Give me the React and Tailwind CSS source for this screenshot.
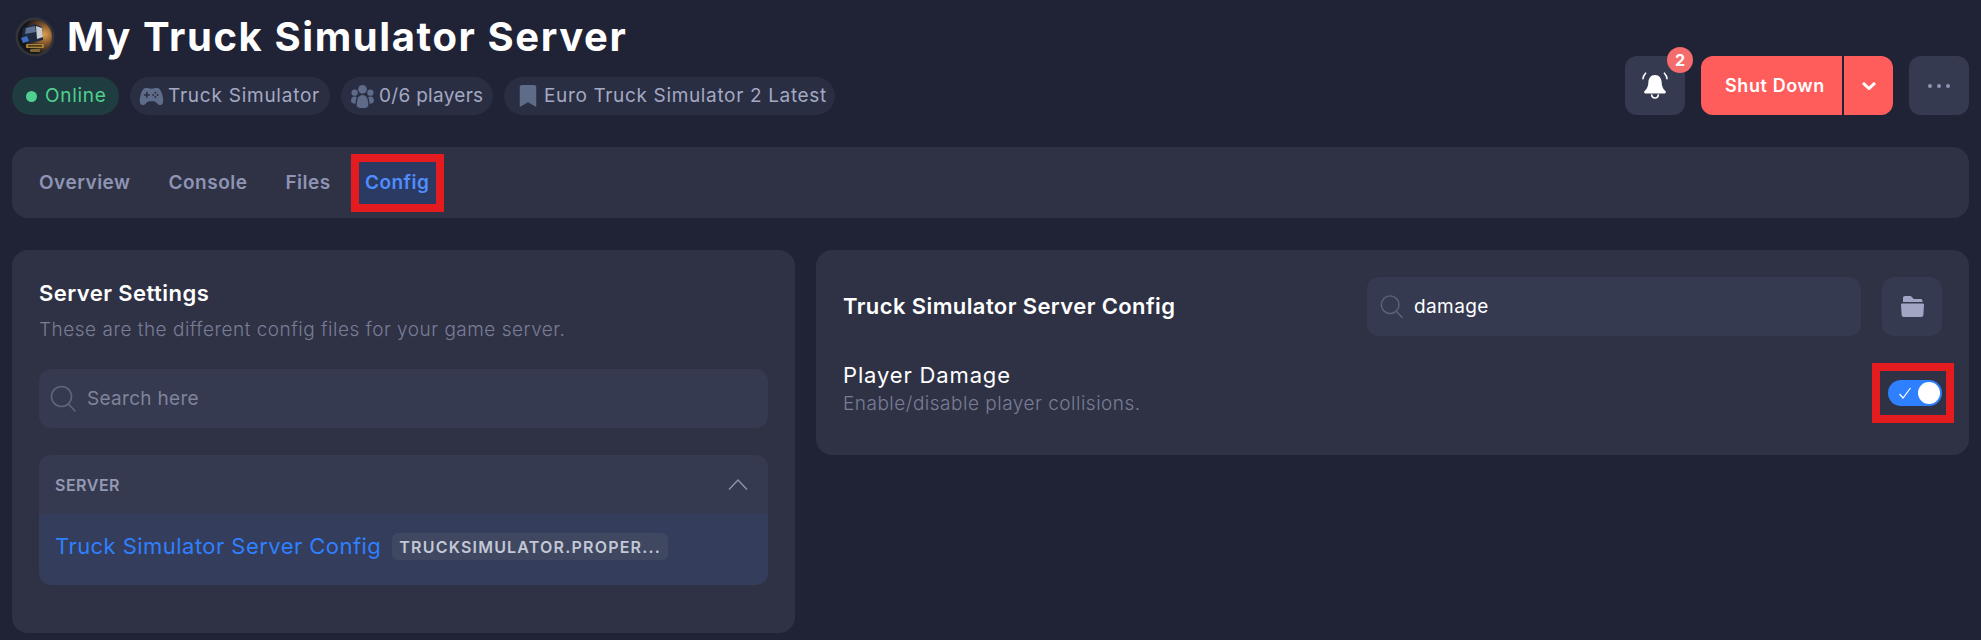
import { FaBookmark } from "react-icons/fa";
import { IoGameController } from "react-icons/io5";

const tabs = ["Overview", "Console", "Files"];

function SearchIcon({ className }) {
    return (
        <svg className={className} viewBox="0 0 26 27" fill="none" stroke="currentColor" strokeWidth="1.6" strokeLinecap="round">
            <circle cx="11.5" cy="11.5" r="10" />
            <path d="M18.5 19 L25 26" />
        </svg>
    );
}

function UsersIcon({ className }) {
    return (
        <svg className={className} viewBox="0 0 24 24" fill="currentColor">
            <circle cx="12" cy="4.5" r="4.5" />
            <circle cx="3.8" cy="8" r="3.3" />
            <circle cx="20.2" cy="8" r="3.3" />
            <path d="M6 21 C6 14 8 10.5 12 10.5 C16 10.5 18 14 18 21 C18 23 16 24 12 24 C8 24 6 23 6 21 Z" />
            <path d="M4.8 19.5 C2 19.5 0 18.5 0 16.5 C0 13.5 1.5 12 3.8 12 C4.8 12 5.6 12.3 6.2 12.8 C5.2 14.6 4.8 16.8 4.8 19.5 Z" />
            <path d="M19.2 19.5 C22 19.5 24 18.5 24 16.5 C24 13.5 22.5 12 20.2 12 C19.2 12 18.4 12.3 17.8 12.8 C18.8 14.6 19.2 16.8 19.2 19.5 Z" />
        </svg>
    );
}

function BellIcon({ className }) {
    return (
        <svg className={className} viewBox="0 0 26 27">
            <path fill="currentColor" d="M13 3 C8.6 3 6.6 6.4 6.4 10 C6.2 14 5.4 16.6 2.6 19 C1.6 19.9 2.2 21.4 3.5 21.4 L22.5 21.4 C23.8 21.4 24.4 19.9 23.4 19 C20.6 16.6 19.8 14 19.6 10 C19.4 6.4 17.4 3 13 3 Z" />
            <path fill="none" stroke="currentColor" strokeWidth="1.6" d="M9.6 22.4 C9.8 24.8 11.2 26 13 26 C14.8 26 16.2 24.8 16.4 22.4" />
            <path fill="none" stroke="currentColor" strokeWidth="1.6" strokeLinecap="round" d="M3.6 1.2 C2 2.8 1.2 4.6 1 6.8 M22.4 1.2 C24 2.8 24.8 4.6 25 6.8" />
        </svg>
    );
}

function FolderIcon({ className }) {
    return (
        <svg className={className} viewBox="0 0 23 21" fill="currentColor">
            <path d="M2 6 L2 2 C2 0.9 2.9 0 4 0 L9 0 C10 0 10.6 0.6 11.4 1.6 L12.6 3 L20 3 C20.8 3 21.4 3.8 21.6 6 Z" />
            <path d="M1.4 7.6 L21.6 7.6 C22.5 7.6 23 8.2 23 9 L22.4 18.8 C22.3 20.2 21.4 21 20 21 L3 21 C1.6 21 0.7 20.2 0.6 18.8 L0 9 C0 8.2 0.5 7.6 1.4 7.6 Z" />
        </svg>
    );
}

function Avatar() {
    return (
        <svg className="h-[40px] w-[40px] shrink-0" viewBox="0 0 40 40">
            <defs>
                <radialGradient id="sky" cx="0.78" cy="0.42" r="0.6">
                    <stop offset="0" stopColor="#e0a04a" />
                    <stop offset="0.5" stopColor="#7a4f2b" />
                    <stop offset="1" stopColor="#15161c" />
                </radialGradient>
            </defs>
            <circle cx="20" cy="20" r="19.5" fill="#33343a" />
            <circle cx="20" cy="20" r="17" fill="url(#sky)" />
            <path d="M8 11 L20 7 L27 10 L28 23 L12 27 L7 20 Z" fill="#1e2a40" />
            <path d="M11 11 L20 9 L21 15 L10 17 Z" fill="#5f7390" />
            <path d="M21 9 L27 11 L28 20 L22 22 Z" fill="#c9cdd2" />
            <path d="M6 21 L12 19 L14 24 L8 26 Z" fill="#3f6ec0" />
            <rect x="11" y="27" width="18" height="4" rx="1" fill="#a98638" />
            <rect x="13" y="28.2" width="14" height="1.4" fill="#3a2c18" />
            <rect x="15" y="32" width="10" height="3" rx="1" fill="#7d6633" />
        </svg>
    );
}

function Pill({ className, children }) {
    return (
        <div className={`flex h-[38px] items-center rounded-full text-[19px] ${className}`}>
            {children}
        </div>
    );
}

export default function App() {
    return (
        <div className="h-[640px] w-[1981px] overflow-hidden bg-[#1f2335] px-3 font-['Inter',sans-serif]">
            {/* Header */}
            <div className="flex h-[147px] justify-between">
                <div>
                    <div className="flex h-[77px] items-center gap-[12px] pb-[4px] pl-[3px]">
                        <Avatar />
                        <h1 className="text-[40px] font-bold tracking-[1.6px] text-white">My Truck Simulator Server</h1>
                    </div>
                    <div className="flex gap-[11px]">
                        <Pill className="w-[107px] gap-[8px] bg-[#1f3d40] pl-[14px] tracking-[0.7px] text-[#4fd08f]">
                            <span className="h-[11px] w-[11px] rounded-full bg-[#4fd08f]" />
                            Online
                        </Pill>
                        <Pill className="w-[200px] gap-[4px] bg-[#2a2e43] pl-[9px] tracking-[0.75px] text-[#a3a9c2]">
                            <IoGameController className="text-[25px] text-[#5e6b89]" />
                            Truck Simulator
                        </Pill>
                        <Pill className="w-[152px] gap-[5px] bg-[#2a2e43] pl-[10px] tracking-[0.3px] text-[#a3a9c2]">
                            <UsersIcon className="h-[23px] w-[23px] text-[#5e6b89]" />
                            0/6 players
                        </Pill>
                        <Pill className="w-[331px] gap-[5px] bg-[#2a2e43] pl-[13px] tracking-[0.65px] text-[#a3a9c2]">
                            <FaBookmark className="text-[22px] text-[#5e6b89]" />
                            Euro Truck Simulator 2 Latest
                        </Pill>
                    </div>
                </div>
                <div className="flex items-start gap-4 pt-[56px]">
                    <button className="relative flex h-[59px] w-[60px] items-center justify-center rounded-xl bg-[#353a50] text-white">
                        <BellIcon className="h-[27px] w-[26px]" />
                        <span className="absolute -right-[8px] -top-[9px] flex h-[26px] w-[26px] items-center justify-center rounded-full bg-[#f56c6c] text-[16px] font-bold">2</span>
                    </button>
                    <div className="flex h-[59px] w-[192px] overflow-hidden rounded-xl bg-[#ff5c5c] text-white">
                        <div className="flex w-[141px] items-center justify-center pl-[7px] text-[18px] font-semibold tracking-[0.6px]">Shut Down</div>
                        <div className="w-[2px] bg-[#1f2335]" />
                        <div className="flex flex-1 items-center justify-center">
                            <svg className="h-[8px] w-[14px]" viewBox="0 0 14 8" fill="none" stroke="currentColor" strokeWidth="3">
                                <path d="M1 1 L7 6.5 L13 1" />
                            </svg>
                        </div>
                    </div>
                    <button className="flex h-[59px] w-[60px] items-center justify-center gap-[5px] rounded-xl bg-[#353a50]">
                        <span className="h-[4px] w-[4px] rounded-full bg-[#8e94b3]" />
                        <span className="h-[4px] w-[4px] rounded-full bg-[#8e94b3]" />
                        <span className="h-[4px] w-[4px] rounded-full bg-[#8e94b3]" />
                    </button>
                </div>
            </div>

            {/* Tabs */}
            <div className="flex h-[71px] items-center rounded-2xl bg-[#2f3245] pl-[27px] text-[19px] font-semibold tracking-[0.5px] text-[#8e94b3]">
                <div className="flex gap-[38px] pt-[1px]">
                    {tabs.map((tab) => (
                        <span key={tab}>{tab}</span>
                    ))}
                </div>
                <div className="ml-[20px] flex h-[58px] w-[93px] items-center justify-center border-[8px] border-[#e51c1f] bg-[#2b3a63] pt-[1px] text-[#4f8dff]">
                    Config
                </div>
            </div>

            <div className="mt-8 flex items-start gap-[21px]">
                {/* Server settings */}
                <div className="h-[383px] w-[783px] rounded-2xl bg-[#2f3245] px-[27px] pt-[31px]">
                    <h2 className="text-[22px] font-semibold leading-[24px] tracking-[0.45px] text-white">Server Settings</h2>
                    <p className="mt-[13px] text-[19px] font-light leading-[24px] tracking-[0.5px] text-[#787d95]">These are the different config files for your game server.</p>
                    <div className="mt-[27px] flex h-[59px] items-center gap-[11px] rounded-xl bg-[#353a50] pl-[11px] text-[19px] tracking-[0.3px] text-[#7f849c]">
                        <SearchIcon className="h-[27px] w-[26px] text-[#5f6479]" />
                        <span className="pt-[2px]">Search here</span>
                    </div>
                    <div className="mt-[27px] overflow-hidden rounded-xl">
                        <div className="flex h-[59px] items-center justify-between bg-[#353a50] pl-4 pr-[20px]">
                            <span className="text-[16px] font-semibold tracking-[0.5px] text-[#9399b2]">SERVER</span>
                            <svg className="h-[11px] w-[20px] text-[#8e94b3]" viewBox="0 0 20 11" fill="none" stroke="currentColor" strokeWidth="1.3">
                                <path d="M1 10.5 L10 1 L19 10.5" />
                            </svg>
                        </div>
                        <div className="flex h-[71px] items-center gap-[11px] bg-[#343d5c] pb-[6px] pl-4">
                            <span className="text-[22px] tracking-[0.45px] text-[#2f80ff]">Truck Simulator Server Config</span>
                            <span className="flex h-[27px] w-[276px] items-center justify-center rounded-md bg-[#3f4860] text-[16px] font-semibold tracking-[1.2px] text-[#c3c7d6]">TRUCKSIMULATOR.PROPER...</span>
                        </div>
                    </div>
                </div>

                {/* Config panel */}
                <div className="h-[205px] flex-1 rounded-2xl bg-[#2f3245] pl-[27px] pr-[27px] pt-[27px]">
                    <div className="flex items-center justify-between">
                        <h2 className="text-[22px] font-semibold tracking-[0.4px] text-white">Truck Simulator Server Config</h2>
                        <div className="flex gap-[21px]">
                            <div className="flex h-[59px] w-[494px] items-center gap-[11px] rounded-xl bg-[#353a50] pl-[13px] text-[19px] tracking-[0.4px] text-white">
                                <SearchIcon className="h-[25px] w-[23px] text-[#5f6479]" />
                                <span className="pt-[2px]">damage</span>
                            </div>
                            <button className="flex h-[59px] w-[60px] items-center justify-center rounded-xl bg-[#353a50] text-[#a0a6c4]">
                                <FolderIcon className="h-[21px] w-[23px]" />
                            </button>
                        </div>
                    </div>
                    <div className="mt-[27px] flex items-center justify-between">
                        <div className="-mt-[8px]">
                            <div className="text-[22px] leading-[29px] tracking-[0.85px] text-white">Player Damage</div>
                            <div className="text-[19px] font-light leading-[28px] tracking-[0.5px] text-[#787d95]">Enable/disable player collisions.</div>
                        </div>
                        <div className="-mr-[12px] flex h-[60px] w-[82px] items-center justify-end border-[8px] border-[#e51c1f] pr-[4px]">
                            <div className="flex h-[26px] w-[54px] items-center justify-between rounded-full bg-[#2f80ff] pl-[10px] pr-[2px]">
                                <svg className="h-[14px] w-[14px] text-white" viewBox="0 0 14 14" fill="none" stroke="currentColor" strokeWidth="1.2">
                                    <path d="M1.5 8 L5 12 L12.5 2" />
                                </svg>
                                <span className="h-[22px] w-[22px] rounded-full bg-white" />
                            </div>
                        </div>
                    </div>
                </div>
            </div>
        </div>
    );
}
